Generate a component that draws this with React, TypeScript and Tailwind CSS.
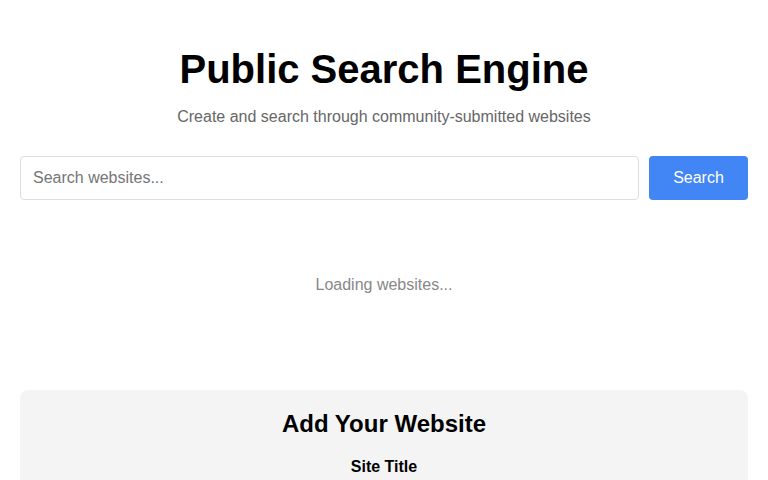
export default function App() {
  return (
    <div className="min-h-screen bg-white px-5 font-['Liberation_Sans',Arial,sans-serif] text-black">
      {/* Header */}
      <header className="pt-[46px] text-center">
        <h1 className="text-[40px] font-bold leading-[46px]">Public Search Engine</h1>
        <p className="mt-[16px] text-base leading-[18px] text-[#666]">
          Create and search through community-submitted websites
        </p>
      </header>

      {/* Search bar */}
      <div className="mt-[30px] flex gap-[10px]">
        <input
          type="text"
          placeholder="Search websites..."
          className="h-11 flex-1 rounded border border-[#ddd] px-3 text-base outline-none placeholder:text-[#757575]"
        />
        <button className="h-11 w-[99px] rounded bg-[#4285f4] text-base text-white">Search</button>
      </div>

      {/* Results */}
      <div className="mt-[76px] text-center text-base leading-[18px] text-[#888]">Loading websites...</div>

      {/* Submit form */}
      <section className="mt-[96px] rounded-lg bg-[#f4f4f4] p-5 text-center">
        <h2 className="text-2xl font-bold leading-[28px]">Add Your Website</h2>
        <label className="mt-[20px] block text-base font-bold leading-[18px]">Site Title</label>
        <input type="text" className="mt-2 h-11 w-full rounded border border-[#ddd] bg-white px-3" />
      </section>
    </div>
  );
}
